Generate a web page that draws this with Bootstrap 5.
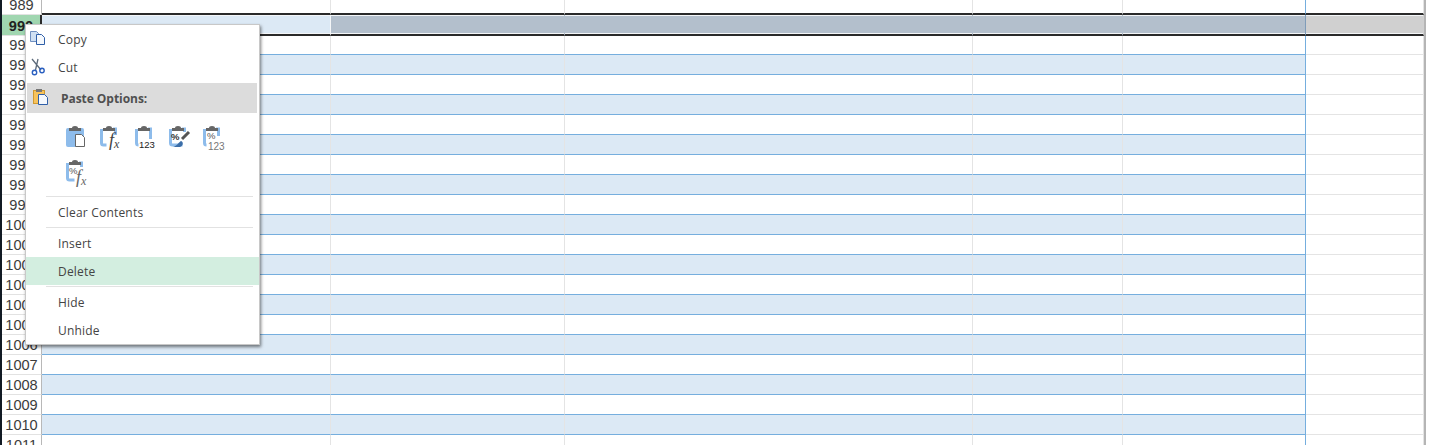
<!DOCTYPE html>
<html lang="en"><head><meta charset="utf-8"><title>Sheet</title>
<link href="https://cdn.jsdelivr.net/npm/bootstrap@5.3.0/dist/css/bootstrap.min.css" rel="stylesheet">
<style>
html,body{height:445px;overflow:hidden;background:#fff}
.stage{position:relative;height:445px;overflow:hidden;border-left:2px solid #111a24}
.sheet{width:1424px;margin-top:-5px;border-collapse:separate;border-spacing:0;table-layout:fixed;border-right:2px solid #b5b5b5}
.sheet tr{height:20px}
.sheet tr.sel{height:21px}
.sheet tr.aftersel{height:19px}
.sheet th{padding:1px 0 0;text-align:center;font:400 14.6px/18px "Liberation Sans",sans-serif;color:#3c3c3c;border-right:1px solid #b8b8b8;border-bottom:1px solid #e2e2e2;background:#fff;overflow:hidden;white-space:nowrap}
.sheet tr.aftersel th{line-height:17px}
.sheet td{padding:0;border-right:1px solid #e4e4e4;border-bottom:1px solid #e4e4e4}
.sheet td.dat{border-bottom-color:#75aede}
.sheet td.edge{border-right-color:#75aede}
.sheet tr.band td.dat{background:#dce9f5}
.sheet tr.presel td{border-bottom:2px solid #2a2a2a}
.sheet tr.sel th{background:#a0d6b0;font-weight:700;color:#222;border-right:2px solid #2a2a2a}
.sheet tr.sel td{background:#b3bfcc;border-bottom:2px solid #2a2a2a;border-right-color:#b3bfcc;box-shadow:inset 0 1px #f4f6f8,inset 0 -1px #f4f6f8}
.sheet tr.sel td.first{background:#dce9f5;border-right-color:#f4f6f8}
.sheet tr.sel td.edge{border-right-color:#7f9cb9}
.sheet tr.sel td.tail{background:#d0d0d0;border-right-color:#d0d0d0}
.ctx{position:absolute;left:23px;top:24px;width:235px;height:321px;display:block;padding:1px 0 0;margin:0;border:1px solid #c8c8c8;border-radius:0;box-shadow:1px 2px 3px rgba(0,0,0,.5);font:12px/16px "Open Sans",sans-serif;letter-spacing:.2px;color:#444;background:#fff}
.ctx-item{height:28px;padding-left:32px;display:flex;align-items:center;position:relative}
.ctx-item.clr{height:30px;padding-top:1px}
.ctx-item.ins{height:29px;padding-top:2px}
.ctx-item.hid{height:29px;padding-top:3px}
.ctx-item.unh{padding-top:2px}
.ctx-item.hot{background:#d3eee0;padding-top:2px}
.ctx-ic{position:absolute;left:3px;top:3px}
.ctx-head{margin:1px 2px 0 1px;height:30px;padding-top:2px;background:#dcdcdc;padding-left:34px;display:flex;align-items:center;font-weight:700;color:#505050;position:relative;letter-spacing:-.05px}
.ctx-head svg{position:absolute;left:5px;top:5px}
.paste-grid{display:flex;flex-wrap:wrap;gap:8px 10.25px;padding:12px 20px 0 39px;height:83px;align-content:flex-start}
.paste-grid svg{width:24px;height:26px;display:block;overflow:visible}
.rule{height:1px;background:#e2e2e2;margin:0 6px 0 20px}
.rule.low{margin-top:1px}
.pct{font:9.5px "Liberation Sans",sans-serif;fill:#555;letter-spacing:0}
.fx{font:italic 18px "Liberation Serif",serif;fill:#444;letter-spacing:0}
.fxs{font:italic 12px "Liberation Serif",serif;fill:#444;letter-spacing:0}
.num{font:9.5px "Liberation Sans",sans-serif;fill:#222;letter-spacing:0}
.num2{font:10px "Liberation Sans",sans-serif;fill:#777;letter-spacing:0}
.bd{fill:none;stroke:#8ebceb;stroke-width:3}
.clp{fill:#666}
</style></head><body>
<div class="stage">
<table class="sheet"><colgroup><col style="width:40px"><col style="width:289px"><col style="width:234px"><col style="width:408px"><col style="width:150px"><col style="width:183px"><col></colgroup>
<tbody id="rows"></tbody></table>
<div class="dropdown-menu ctx">
  <div class="ctx-item"><svg class="ctx-ic" width="20" height="20" viewBox="0 0 20 20"><path d="M1.500 2.500h6l2 2v8h-8z" fill="#cfe0f3" stroke="#6f8fc0"/><path d="M7.500 5.500h5l3 3v7h-8z" fill="#f4f8fd" stroke="#2f5fa8"/></svg>Copy</div>
  <div class="ctx-item"><svg class="ctx-ic" width="20" height="24" viewBox="0 0 20 24"><path d="M3 2l9 11M9 2L6.500 13" stroke="#5d6b7b" stroke-width="1.300" fill="none"/><circle cx="5.500" cy="15.500" r="2.200" fill="none" stroke="#2a5fc0" stroke-width="1.400"/><circle cx="13" cy="13.500" r="2.200" fill="none" stroke="#2a5fc0" stroke-width="1.400"/></svg>Cut</div>
  <div class="ctx-head"><svg width="20" height="22" viewBox="0 0 20 22"><rect x="1.500" y="2.500" width="11" height="13" fill="#f7c35c" stroke="#d09a30"/><rect x="4" y="1" width="6" height="3" fill="#777"/><path d="M6.500 6.500h6l3 3v7h-9z" fill="#f4f8fd" stroke="#2f5fa8"/></svg>Paste Options:</div>
  <div class="paste-grid">
    <svg viewBox="0 0 24 26"><rect x="1" y="3" width="18" height="19" rx="2" fill="#8ebceb"/><path class="clp" d="M4 6V3h3a3 2 0 0 1 6 0h3v3z"/><path d="M10.500 9.500h6l3 3v9h-9z" fill="#fff" stroke="#666"/></svg>
    <svg viewBox="0 0 24 26"><path class="bd" d="M2.500 4v14a2 2 0 0 0 2 2h3M14 4h2.500v6"/><path class="clp" d="M4 6V3h3a3 2 0 0 1 6 0h3v3z"/><text class="fx" x="10" y="21">f</text><text class="fxs" x="15" y="23">x</text></svg>
    <svg viewBox="0 0 24 26"><path class="bd" d="M2.500 4v14a2 2 0 0 0 2 2M14 4h2.500v10"/><path class="clp" d="M4 6V3h3a3 2 0 0 1 6 0h3v3z"/><text class="num" x="5" y="23">123</text></svg>
    <svg viewBox="0 0 24 26"><path class="bd" d="M2.500 4v14a2 2 0 0 0 2 2h10M14 4h2.500v3"/><path class="clp" d="M4 6V3h3a3 2 0 0 1 6 0h3v3z"/><text class="pct" x="3" y="15" style="font-weight:700;fill:#333">%</text><path d="M21 7l-7 7" stroke="#555" stroke-width="3"/><path d="M5 22c4-1 6-5 8-6 3 1 2 5-1 6z" fill="#3c6ea8"/></svg>
    <svg viewBox="0 0 24 26"><path class="bd" d="M2.500 4v14a2 2 0 0 0 2 2M14 4h2.500v7"/><path class="clp" d="M4 6V3h3a3 2 0 0 1 6 0h3v3z"/><text class="pct" x="5" y="14">%</text><text class="num2" x="6" y="25">123</text></svg>
    <svg viewBox="0 0 24 26"><path class="bd" d="M2.500 4v15a2 2 0 0 0 2 2h5M14 4h2.500v4"/><path class="clp" d="M4 6V3h3a3 2 0 0 1 6 0h3v3z"/><text class="pct" x="4" y="15">%</text><text class="fx" x="11" y="24" style="fill:#666">f</text><text class="fxs" x="16" y="26" style="fill:#666">x</text></svg>
  </div>
  <div class="rule"></div>
  <div class="ctx-item clr">Clear Contents</div>
  <div class="rule"></div>
  <div class="ctx-item ins">Insert</div>
  <div class="ctx-item hot">Delete</div>
  <div class="rule low"></div>
  <div class="ctx-item hid">Hide</div>
  <div class="ctx-item unh">Unhide</div>
</div>
</div>
<script>
var h='';
for(var n=989;n<=1011;n++){
 var sel=n==990,data=n>990&&n<1011;
 var band=data&&n%2==0;
 var d=(n>=990&&n<=1010)?' dat':'';
 var c=n==989?'presel':sel?'sel':n==991?'aftersel':band?'band':'';
 h+='<tr class="'+c+'"><th>'+n+'</th>';
 h+='<td class="first'+d+'"></td><td class="'+d+'"></td><td class="'+d+'"></td><td class="'+d+'"></td><td class="edge'+d+'"></td><td class="'+(sel?'tail':'')+'"></td></tr>';
}
document.getElementById('rows').innerHTML=h;
</script>
<script src="https://cdn.jsdelivr.net/npm/bootstrap@5.3.0/dist/js/bootstrap.bundle.min.js"></script>
</body></html>
